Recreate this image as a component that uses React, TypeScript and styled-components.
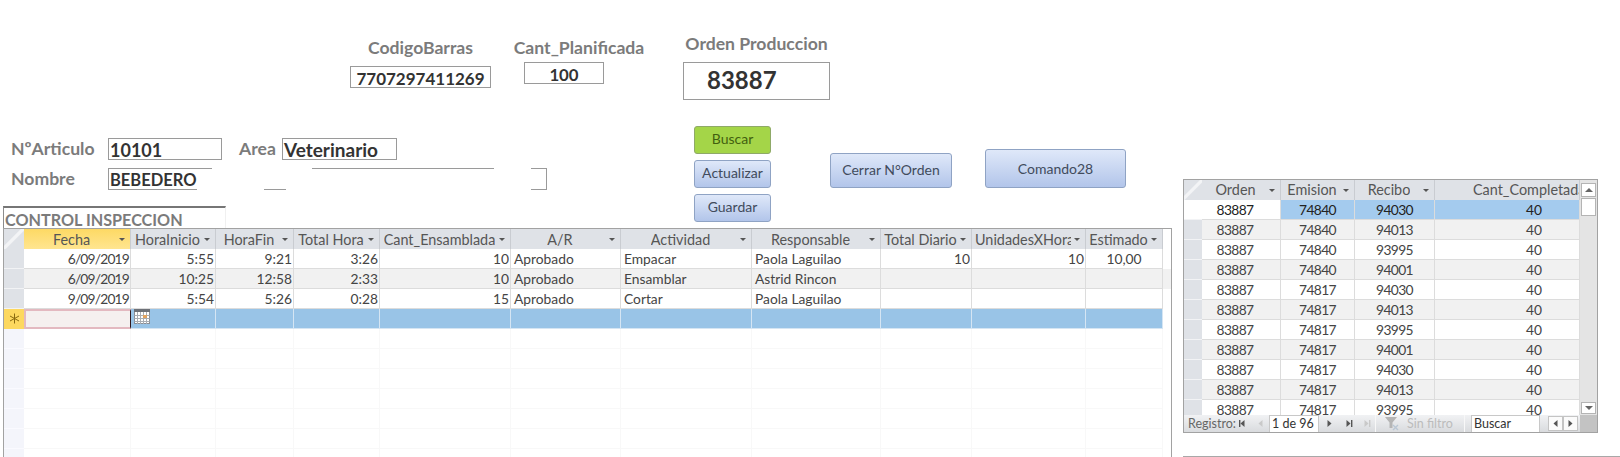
import React, { FC } from 'react'
import styled, { createGlobalStyle } from 'styled-components'

const GlobalStyle = createGlobalStyle`
  html, body {
    margin: 0;
    padding: 0;
    background: #fff;
    overflow: hidden;
  }
  body {
    font-family: Lato, Carlito, "Liberation Sans", sans-serif;
  }
`

const Page = styled.div`
  display: flex;
  width: 1620px;
  height: 457px;
  overflow: hidden;
`

const LeftPanel = styled.div`
  width: 1172px;
  flex: none;
`

const Head = styled.div`
  display: flex;
  height: 228px;
`

const FieldsCol = styled.div`
  width: 683px;
  flex: none;
`

const TopFields = styled.div`
  display: flex;
  gap: 33px;
  margin-left: 350px;
  padding-top: 38px;
  height: 50px;
`

const Stack = styled.div<{ $width: number; $gap: number }>`
  display: flex;
  flex-direction: column;
  align-items: center;
  width: ${({ $width }) => $width}px;
  flex: none;
  gap: ${({ $gap }) => $gap}px;
`

const Label = styled.div<{ $shift?: number }>`
  color: #7b7b7b;
  font-size: 17.6px;
  line-height: 20px;
  font-weight: 700;
  white-space: nowrap;
  margin-left: ${({ $shift }) => $shift || 0}px;
`

const ValueBox = styled.div<{ $width?: number; $height?: number; $size?: number; $align?: string; $line: number }>`
  box-sizing: border-box;
  width: ${({ $width }) => ($width ? `${$width}px` : '100%')};
  height: ${({ $height }) => $height || 22}px;
  line-height: ${({ $line }) => $line}px;
  border: 1px solid #9a9a9a;
  color: #333;
  font-size: ${({ $size }) => $size || 16.8}px;
  font-weight: 700;
  padding: 0 1px;
  text-align: ${({ $align }) => $align || 'left'};
  white-space: nowrap;
  overflow: hidden;
`

const OrderBox = styled(ValueBox)`
  padding-left: 23px;
`

const FormRow = styled.div<{ $top: number }>`
  display: flex;
  align-items: center;
  height: 22px;
  margin-top: ${({ $top }) => $top}px;
  padding-left: 11px;
`

const RowLabel = styled(Label)<{ $width: number; $left?: number }>`
  width: ${({ $width }) => $width}px;
  margin-left: ${({ $left }) => $left || 0}px;
  flex: none;
`

const Piece = styled.div<{ $width: number; $edges?: string }>`
  box-sizing: border-box;
  width: ${({ $width }) => $width}px;
  height: 22px;
  flex: none;
  color: #333;
  font-size: 16.5px;
  font-weight: 700;
  line-height: 23px;
  padding-left: 1px;
  white-space: nowrap;
  border-style: solid;
  border-color: #9a9a9a;
  border-width: 0;
  ${({ $edges = '' }) => `
    ${$edges.includes('t') ? 'border-top-width: 1px;' : ''}
    ${$edges.includes('b') ? 'border-bottom-width: 1px;' : ''}
    ${$edges.includes('l') ? 'border-left-width: 1px;' : ''}
    ${$edges.includes('r') ? 'border-right-width: 1px;' : ''}
  `}
`

const ControlTitle = styled.div`
  box-sizing: border-box;
  width: 223px;
  height: 22px;
  margin: 16px 0 0 3px;
  border-top: 2px solid #767676;
  border-left: 1px solid #8c8c8c;
  border-right: 1px solid #f0f0f0;
  color: #7b7b7b;
  font-size: 16.2px;
  font-weight: 700;
  line-height: 23px;
  padding-left: 1px;
  white-space: nowrap;
`

const ActionCol = styled.div`
  width: 147px;
  flex: none;
  padding-top: 34px;
`

const ButtonStack = styled.div`
  display: flex;
  flex-direction: column;
  gap: 6px;
  margin: 26px 0 0 11px;
`

const FormButton = styled.button<{ $width: number; $height: number; $green?: boolean; $lift?: number }>`
  box-sizing: border-box;
  width: ${({ $width }) => $width}px;
  height: ${({ $height }) => $height}px;
  flex: none;
  padding: 0 0 ${({ $lift }) => $lift || 0}px;
  border: 1px solid ${({ $green }) => ($green ? '#8fa968' : '#8fa3c4')};
  border-radius: 3px;
  background: ${({ $green }) => ($green ? '#a4d548' : 'linear-gradient(#dfe8f9, #b2c5ea)')};
  color: ${({ $green }) => ($green ? '#42600f' : '#414b5c')};
  font-family: inherit;
  font-size: 14px;
`

const WideButtons = styled.div`
  display: flex;
  align-items: flex-end;
  gap: 33px;
  height: 39px;
  padding-top: 149px;
`

const Sheet = styled.div`
  box-sizing: border-box;
  height: 229px;
  margin-left: 3px;
  overflow: hidden;
  border: 1px solid #a2a2a2;
  border-bottom: 0;
`

const Row = styled.div<{ $cols: string; $height?: number; $tone?: string }>`
  display: grid;
  grid-template-columns: ${({ $cols }) => $cols};
  height: ${({ $height }) => $height || 20}px;
  background: ${({ $tone }) => $tone || 'transparent'};
`

const Cell = styled.div<{
  $align?: string
  $pad?: number
  $padEnd?: number
  $line?: string
  $bg?: string
  $ink?: string
  $tight?: number
}>`
  box-sizing: border-box;
  overflow: hidden;
  white-space: nowrap;
  padding: 0 ${({ $pad, $padEnd }) => ($padEnd !== undefined ? $padEnd : $pad === undefined ? 3 : $pad)}px 0
    ${({ $pad }) => ($pad === undefined ? 3 : $pad)}px;
  text-align: ${({ $align }) => $align || 'left'};
  color: ${({ $ink }) => $ink || '#444'};
  font-size: 13.8px;
  line-height: 19px;
  letter-spacing: ${({ $tight }) => $tight || 0}px;
  background: ${({ $bg }) => $bg || 'transparent'};
  border-right: 1px solid ${({ $line }) => $line || '#dcdcdc'};
  border-bottom: 1px solid ${({ $line }) => $line || '#dcdcdc'};
`

const HeaderCell = styled.div<{ $hot?: boolean; $align?: string; $pad?: number; $lift?: number }>`
  box-sizing: border-box;
  display: flex;
  align-items: center;
  justify-content: ${({ $align }) => $align || 'center'};
  overflow: hidden;
  position: relative;
  padding: 0 ${({ $pad }) => ($pad === undefined ? 14 : $pad)}px ${({ $lift }) => $lift || 0}px 3px;
  white-space: nowrap;
  color: #565656;
  font-size: 14.4px;
  background: ${({ $hot }) => ($hot ? 'linear-gradient(#fdd964, #ffe590)' : '#dfe2e7')};
  border-right: 1px solid #c9ccd1;
`

const HeaderName = styled.span`
  overflow: hidden;
  min-width: 0;
  flex: 0 1 auto;
`

const DropArrow = styled.span`
  position: absolute;
  right: 5px;
  top: 9px;
  width: 0;
  height: 0;
  border-left: 3px solid transparent;
  border-right: 3px solid transparent;
  border-top: 3px solid #555;
`

const Corner = styled.div`
  background: linear-gradient(135deg, #dfe2e7 0 40%, #f3f4f6 44% 52%, #dfe2e7 56%);
`

const Selector = styled.div<{ $tone?: string; $line?: string }>`
  display: flex;
  align-items: center;
  justify-content: center;
  background: ${({ $tone }) => $tone || '#dfe2e7'};
  border-bottom: 1px solid ${({ $line }) => $line || '#f2f3f5'};
  box-sizing: border-box;
`

const EntryCell = styled.div`
  box-sizing: border-box;
  background: #f5f0ef;
  border: 2px solid #e3b9c0;
  border-right: 1px solid #30181c;
`

const RightPanel = styled.div`
  width: 437px;
  margin-left: 11px;
  flex: none;
  padding-top: 179px;
`

const Lookup = styled.div`
  box-sizing: border-box;
  width: 415px;
  height: 254px;
  display: grid;
  grid-template-columns: 396px 17px;
  grid-template-rows: 235px 17px;
  border: 1px solid #a2a2a2;
`

const LookupData = styled.div`
  overflow: hidden;
`

const ScrollBar = styled.div`
  background: #e4e4e4;
  display: flex;
  flex-direction: column;
  align-items: center;
  padding-top: 3px;
`

const ScrollButton = styled.div<{ $height: number; $top?: number }>`
  box-sizing: border-box;
  display: flex;
  align-items: center;
  justify-content: center;
  width: 15px;
  height: ${({ $height }) => $height}px;
  margin-top: ${({ $top }) => $top || 0}px;
  background: #fff;
  border: 1px solid #b4b4b4;
`

const Caret = styled.span<{ $down?: boolean }>`
  width: 0;
  height: 0;
  border-left: 4px solid transparent;
  border-right: 4px solid transparent;
  ${({ $down }) => ($down ? 'border-top: 4px solid #666;' : 'border-bottom: 4px solid #666;')}
`

const NavBar = styled.div`
  display: flex;
  align-items: center;
  height: 17px;
  padding-left: 4px;
  background: linear-gradient(#f1f2f4, #d9dbde);
  color: #666;
  font-size: 12.5px;
  white-space: nowrap;
`

const NavText = styled.div<{ $width: number; $faded?: boolean }>`
  width: ${({ $width }) => $width}px;
  flex: none;
  color: ${({ $faded }) => ($faded ? '#bcbcbc' : '#666')};
`

const NavIconSlot = styled.div<{ $width: number }>`
  display: flex;
  align-items: center;
  justify-content: center;
  width: ${({ $width }) => $width}px;
  height: 100%;
  flex: none;
`

const NavBox = styled.div<{ $width: number; $left?: number }>`
  box-sizing: border-box;
  width: ${({ $width }) => $width}px;
  height: 17px;
  margin-left: ${({ $left }) => $left || 0}px;
  flex: none;
  padding-left: 2px;
  background: #fff;
  border: 1px solid #c8c8c8;
  border-bottom: 0;
  color: #333;
  font-size: 12.5px;
  line-height: 16px;
`

const NavDivider = styled.div`
  width: 1px;
  height: 100%;
  flex: none;
  background: #f8f8f8;
`

const HScroll = styled.div`
  display: flex;
  margin-left: 8px;
  height: 15px;
  flex: none;
`

const HScrollButton = styled.div`
  box-sizing: border-box;
  display: flex;
  align-items: center;
  justify-content: center;
  width: 15px;
  height: 15px;
  background: #fbfbfb;
  border: 1px solid #c4c4c4;
`

const NavCorner = styled.div`
  background: #c3c3c3;
`

const BottomFrame = styled.div`
  display: flex;
  height: 2px;
  margin-top: 23px;
  border-top: 1px solid #a8a8a8;
`

const BottomCol = styled.div<{ $width: number }>`
  width: ${({ $width }) => $width}px;
  flex: none;
  border-left: 1px solid #a8a8a8;
`

const mainCols = '20px 107px 85px 78px 86px 131px 110px 131px 129px 91px 114px 77px 9px'
const sideCols = '18px 79px 74px 80px 145px'

const mainHeaders = [
  'Fecha',
  'HoraInicio',
  'HoraFin',
  'Total Hora',
  'Cant_Ensamblada',
  'A/R',
  'Actividad',
  'Responsable',
  'Total Diario',
  'UnidadesXHora',
  'Estimado',
]

const mainRows = [
  ['6/09/2019', '5:55', '9:21', '3:26', '10', 'Aprobado', 'Empacar', 'Paola Laguilao', '10', '10', '10,00'],
  ['6/09/2019', '10:25', '12:58', '2:33', '10', 'Aprobado', 'Ensamblar', 'Astrid Rincon', '', '', ''],
  ['9/09/2019', '5:54', '5:26', '0:28', '15', 'Aprobado', 'Cortar', 'Paola Laguilao', '', '', ''],
]

const sideRows = [
  ['74840', '94030'],
  ['74840', '94013'],
  ['74840', '93995'],
  ['74840', '94001'],
  ['74817', '94030'],
  ['74817', '94013'],
  ['74817', '93995'],
  ['74817', '94001'],
  ['74817', '94030'],
  ['74817', '94013'],
  ['74817', '93995'],
]

const rightAligned = [true, true, true, true, true, false, false, false, true, true, false]

const NavArrow: FC<{ dir: 'left' | 'right'; bar?: boolean; faded?: boolean }> = ({ dir, bar, faded }) => {
  const fill = faded ? '#c9c9c9' : '#555'
  const isLeft = dir === 'left'
  return (
    <svg width="9" height="9" viewBox="0 0 9 9">
      <polygon points={isLeft ? '6.5,1 6.5,8 2.5,4.5' : '2.5,1 2.5,8 6.5,4.5'} fill={fill} />
      {bar && <rect x={isLeft ? 1 : 7} y="1" width="1.4" height="7" fill={fill} />}
    </svg>
  )
}

const Funnel: FC = () => (
  <svg width="16" height="15" viewBox="0 0 16 15">
    <polygon points="1,1 13,1 8.5,6.5 8.5,12 5.5,12 5.5,6.5" fill="#b5b5b5" />
    <path d="M9 9l5 5M14 9l-5 5" stroke="#b9c6d3" strokeWidth="1.4" />
  </svg>
)

const Asterisk: FC = () => (
  <svg width="11" height="11" viewBox="0 0 11 11">
    <path d="M5.5 0.5v10M1 3l9 5M10 3l-9 5" stroke="#8a6a10" strokeWidth="1" fill="none" />
  </svg>
)

const CalendarIcon: FC = () => (
  <svg width="16" height="15" viewBox="0 0 16 15">
    <rect x="0.5" y="0.5" width="15" height="14" fill="#fff" stroke="#8b8f96" />
    <rect x="0" y="0" width="16" height="3" fill="#6d7178" />
    <path d="M0.5 6.5h15M0.5 9.5h15M0.5 12.5h15M3.5 3v12M6.5 3v12M9.5 3v12M12.5 3v12" stroke="#a9adb3" strokeWidth="1" />
    <rect x="9" y="6" width="4" height="3" fill="#e2a35f" />
  </svg>
)

const MainSheet: FC = () => (
  <Sheet>
    <Row $cols={mainCols} $height={20}>
      <Corner />
      {mainHeaders.map((name, i) => (
        <HeaderCell key={name} $hot={i === 0}>
          <HeaderName>{name}</HeaderName>
          <DropArrow />
        </HeaderCell>
      ))}
    </Row>
    {mainRows.map((cells, r) => (
      <Row key={r} $cols={mainCols} $tone={r === 1 ? '#f1f1f1' : undefined}>
        <Selector />
        {cells.map((text, c) => (
          <Cell
            key={c}
            $align={rightAligned[c] ? 'right' : c === 10 ? 'center' : 'left'}
            $pad={rightAligned[c] ? 1 : 3}
            $tight={c === 0 ? -0.8 : 0}
          >
            {text}
          </Cell>
        ))}
      </Row>
    ))}
    <Row $cols={mainCols} $height={20}>
      <Selector $tone="#fdd85f" $line="#fdd85f">
        <Asterisk />
      </Selector>
      <EntryCell />
      {mainHeaders.slice(1).map((name, c) => (
        <Cell key={name} $bg="#99c4e7" $line="#d5e5f3" $pad={c === 0 ? 3 : 0}>
          {c === 0 && <CalendarIcon />}
        </Cell>
      ))}
    </Row>
    {[0, 1, 2, 3, 4, 5, 6].map(r => (
      <Row key={r} $cols={mainCols}>
        <Selector $tone="#f4f5fb" $line="#fafaff" />
        {mainHeaders.map(name => (
          <Cell key={name} $line="#f8f8f8" />
        ))}
      </Row>
    ))}
  </Sheet>
)

const SideSheet: FC = () => (
  <Lookup>
    <LookupData>
      <Row $cols={sideCols} $height={20}>
        <Corner />
        <HeaderCell $lift={2}>
          <HeaderName>Orden</HeaderName>
          <DropArrow />
        </HeaderCell>
        <HeaderCell $lift={2}>
          <HeaderName>Emision</HeaderName>
          <DropArrow />
        </HeaderCell>
        <HeaderCell $lift={2}>
          <HeaderName>Recibo</HeaderName>
          <DropArrow />
        </HeaderCell>
        <HeaderCell $align="flex-start" $pad={0} $lift={2}>
          <HeaderName style={{ marginLeft: 35 }}>Cant_Completada</HeaderName>
        </HeaderCell>
      </Row>
      {sideRows.map((cells, r) => {
        const picked = r === 0
        const tone = r % 2 === 1 ? '#f1f1f1' : undefined
        return (
          <Row key={r} $cols={sideCols} $tone={tone}>
            <Selector $tone={picked ? '#fff' : undefined} />
            <Cell $align="center" $pad={0} $padEnd={12} $tight={-0.6} $ink={picked ? '#222' : undefined}>
              83887
            </Cell>
            {cells.map(text => (
              <Cell key={text} $align="center" $tight={-0.6} $bg={picked ? '#a4cbee' : undefined} $ink={picked ? '#222' : undefined}>
                {text}
              </Cell>
            ))}
            <Cell $align="right" $pad={3} $padEnd={37} $bg={picked ? '#a4cbee' : undefined} $ink={picked ? '#222' : undefined}>
              40
            </Cell>
          </Row>
        )
      })}
    </LookupData>
    <ScrollBar>
      <ScrollButton $height={14}>
        <Caret />
      </ScrollButton>
      <ScrollButton $height={18} $top={1} />
      <ScrollButton $height={12} $top={186}>
        <Caret $down />
      </ScrollButton>
    </ScrollBar>
    <NavBar>
      <NavText $width={45}>Registro:</NavText>
      <NavIconSlot $width={18}>
        <NavArrow dir="left" bar />
      </NavIconSlot>
      <NavIconSlot $width={18}>
        <NavArrow dir="left" faded />
      </NavIconSlot>
      <NavBox $width={50}>1 de 96</NavBox>
      <NavIconSlot $width={20}>
        <NavArrow dir="right" />
      </NavIconSlot>
      <NavIconSlot $width={18}>
        <NavArrow dir="right" bar />
      </NavIconSlot>
      <NavIconSlot $width={18}>
        <NavArrow dir="right" bar faded />
      </NavIconSlot>
      <NavDivider />
      <NavIconSlot $width={31}>
        <Funnel />
      </NavIconSlot>
      <NavText $width={57} $faded>
        Sin filtro
      </NavText>
      <NavDivider />
      <NavBox $width={69} $left={6}>
        Buscar
      </NavBox>
      <HScroll>
        <HScrollButton>
          <NavArrow dir="left" />
        </HScrollButton>
        <HScrollButton>
          <NavArrow dir="right" />
        </HScrollButton>
      </HScroll>
    </NavBar>
    <NavCorner />
  </Lookup>
)

export default function App() {
  return (
    <Page>
      <GlobalStyle />
      <LeftPanel>
        <Head>
          <FieldsCol>
            <TopFields>
              <Stack $width={141} $gap={8}>
                <Label>CodigoBarras</Label>
                <ValueBox $align="center" $size={17} $line={24}>
                  7707297411269
                </ValueBox>
              </Stack>
              <Stack $width={80} $gap={4}>
                <Label $shift={30}>Cant_Planificada</Label>
                <ValueBox $align="center" $line={24}>
                  100
                </ValueBox>
              </Stack>
            </TopFields>
            <FormRow $top={50}>
              <RowLabel $width={97}>NºArticulo</RowLabel>
              <ValueBox $width={114} $size={18} $line={22}>
                10101
              </ValueBox>
              <RowLabel $width={43} $left={17}>
                Area
              </RowLabel>
              <ValueBox $width={115} $size={19} $line={22}>
                Veterinario
              </ValueBox>
            </FormRow>
            <FormRow $top={8}>
              <RowLabel $width={97}>Nombre</RowLabel>
              <Piece $width={89} $edges="tbl">
                BEBEDERO
              </Piece>
              <Piece $width={15} $edges="t" />
              <Piece $width={52} />
              <Piece $width={22} $edges="b" />
              <Piece $width={26} />
              <Piece $width={182} $edges="t" />
              <Piece $width={37} />
              <Piece $width={16} $edges="tbr" />
            </FormRow>
            <ControlTitle>CONTROL INSPECCION</ControlTitle>
          </FieldsCol>
          <ActionCol>
            <Stack $width={147} $gap={8}>
              <Label>Orden Produccion</Label>
              <OrderBox $height={38} $size={24} $line={33}>
                83887
              </OrderBox>
            </Stack>
            <ButtonStack>
              <FormButton $width={77} $height={28} $lift={3} $green>
                Buscar
              </FormButton>
              <FormButton $width={77} $height={28} $lift={3}>
                Actualizar
              </FormButton>
              <FormButton $width={77} $height={28} $lift={3}>
                Guardar
              </FormButton>
            </ButtonStack>
          </ActionCol>
          <WideButtons>
            <FormButton $width={122} $height={35} $lift={2}>
              Cerrar N°Orden
            </FormButton>
            <FormButton $width={141} $height={39}>
              Comando28
            </FormButton>
          </WideButtons>
        </Head>
        <MainSheet />
      </LeftPanel>
      <RightPanel>
        <SideSheet />
        <BottomFrame>
          <BottomCol $width={126} />
          <BottomCol $width={108} />
          <BottomCol $width={200} />
        </BottomFrame>
      </RightPanel>
    </Page>
  )
}
